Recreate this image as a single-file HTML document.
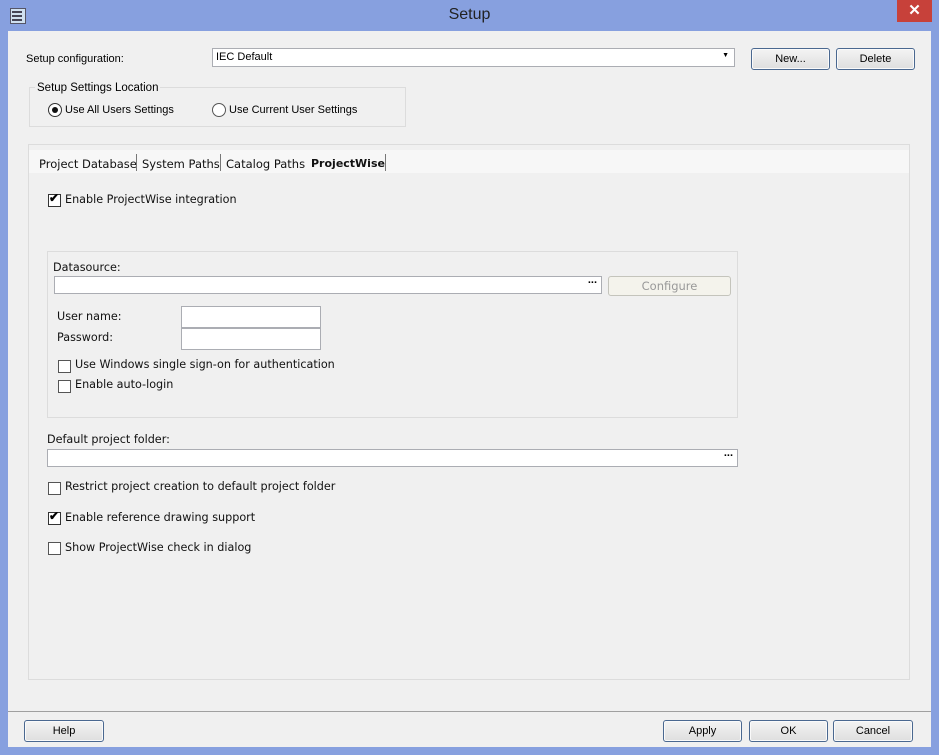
<!DOCTYPE html>
<html><head><style>
*{box-sizing:border-box;margin:0;padding:0}
body{width:939px;height:755px;background:#87a0df;position:relative;overflow:hidden;font-family:"Liberation Sans",sans-serif;font-size:12px;color:#000}
.a{position:absolute}
.c{background:#f0f0f0}
.btn{position:absolute;border:1px solid #707070;border-radius:3px;background:linear-gradient(#f4f4f4,#dedede);text-align:center;font-size:11px;line-height:20px;box-shadow:inset 0 0 0 1px #fafafa}
.btn.b{border-color:#4a6890}
.inp{position:absolute;background:#fff;border:1px solid #abadb3}
.cb{position:absolute;width:13px;height:13px;border:1px solid #333;background:#fff}
.t{position:absolute;font-family:"DejaVu Sans","Liberation Sans",sans-serif;font-size:11.2px;color:#111}
.dots{position:absolute;right:4px;top:-3px;font-size:11px;font-weight:bold;letter-spacing:0}
</style></head><body>
<div class="a" style="left:10px;top:8px;width:16px;height:16px;border:1px solid #556;background:#cfe0f0"></div>
<div class="a" style="left:12px;top:11px;width:10px;height:2px;background:#445"></div>
<div class="a" style="left:12px;top:15px;width:10px;height:2px;background:#445"></div>
<div class="a" style="left:12px;top:19px;width:10px;height:2px;background:#445"></div>
<div class="a" style="left:0;top:6px;width:939px;text-align:center;font-size:16px;color:#222">Setup</div>
<div class="a" style="left:897px;top:0;width:35px;height:22px;background:#c7413a;color:#fff;text-align:center;font-size:15px;line-height:22px;font-weight:bold">✕</div>
<div class="a c" style="left:8px;top:31px;width:923px;height:716px"></div>
<div class="a" style="left:26px;top:53px;font-size:11px">Setup configuration:</div>
<div class="inp" style="left:212px;top:48px;width:523px;height:19px;font-size:11px;padding:2px 3px">IEC Default<span style="position:absolute;right:5px;top:3px;font-size:7px">▼</span></div>
<div class="btn b" style="left:751px;top:48px;width:79px;height:22px">New...</div>
<div class="btn b" style="left:836px;top:48px;width:79px;height:22px">Delete</div>
<div class="a" style="left:29px;top:87px;width:377px;height:40px;border:1px solid #dcdcdc"></div>
<div class="a c" style="left:35px;top:82px;padding:0 2px;font-size:11.5px">Setup Settings Location</div>
<div class="a" style="left:48px;top:103px;width:14px;height:14px;border:1px solid #333;border-radius:50%;background:#fff"></div>
<div class="a" style="left:52px;top:107px;width:6px;height:6px;border-radius:50%;background:#111"></div>
<div class="a" style="left:65px;top:104px;font-size:11px">Use All Users Settings</div>
<div class="a" style="left:212px;top:103px;width:14px;height:14px;border:1px solid #555;border-radius:50%;background:#fff"></div>
<div class="a" style="left:229px;top:104px;font-size:11px">Use Current User Settings</div>
<div class="a" style="left:28px;top:144px;width:882px;height:536px;border:1px solid #dcdcdc"></div>
<div class="a" style="left:29px;top:150px;width:880px;height:23px;background:#f7f7f7"></div>
<div class="t" style="left:39px;top:157px;font-size:11.5px">Project Database</div>
<div class="a" style="left:136px;top:154px;width:1px;height:17px;background:#777"></div>
<div class="t" style="left:142px;top:157px;font-size:11.5px">System Paths</div>
<div class="a" style="left:220px;top:154px;width:1px;height:17px;background:#777"></div>
<div class="t" style="left:226px;top:157px;font-size:11.5px">Catalog Paths</div>
<div class="t" style="left:311px;top:157px;font-weight:bold;font-size:11px">ProjectWise</div>
<div class="a" style="left:385px;top:154px;width:1px;height:17px;background:#777"></div>
<div class="cb" style="left:48px;top:194px"></div><div class="a" style="left:49px;top:191px;font-size:12px;font-weight:bold">✔</div>
<div class="t" style="left:65px;top:193px">Enable ProjectWise integration</div>
<div class="a" style="left:47px;top:251px;width:691px;height:167px;border:1px solid #dcdcdc"></div>
<div class="t" style="left:53px;top:261px">Datasource:</div>
<div class="inp" style="left:54px;top:276px;width:548px;height:18px"><span class="dots">...</span></div>
<div class="a" style="left:608px;top:276px;width:123px;height:20px;border:1px solid #c4c4bc;border-radius:3px;background:#f4f3ec;text-align:center;line-height:19px;color:#999;font-family:'DejaVu Sans',sans-serif;font-size:11.5px">Configure</div>
<div class="t" style="left:57px;top:310px">User name:</div>
<div class="t" style="left:57px;top:331px">Password:</div>
<div class="inp" style="left:181px;top:306px;width:140px;height:22px"></div>
<div class="inp" style="left:181px;top:328px;width:140px;height:22px"></div>
<div class="cb" style="left:58px;top:360px;border-color:#555"></div>
<div class="t" style="left:75px;top:358px">Use Windows single sign-on for authentication</div>
<div class="cb" style="left:58px;top:380px;border-color:#555"></div>
<div class="t" style="left:75px;top:378px">Enable auto-login</div>
<div class="t" style="left:47px;top:433px">Default project folder:</div>
<div class="inp" style="left:47px;top:449px;width:691px;height:18px"><span class="dots">...</span></div>
<div class="cb" style="left:48px;top:482px;border-color:#555"></div>
<div class="t" style="left:65px;top:480px">Restrict project creation to default project folder</div>
<div class="cb" style="left:48px;top:512px"></div><div class="a" style="left:49px;top:509px;font-size:12px;font-weight:bold">✔</div>
<div class="t" style="left:65px;top:511px">Enable reference drawing support</div>
<div class="cb" style="left:48px;top:542px;border-color:#555"></div>
<div class="t" style="left:65px;top:541px">Show ProjectWise check in dialog</div>
<div class="a" style="left:8px;top:711px;width:923px;height:1px;background:#a0a0a0"></div>
<div class="btn b" style="left:24px;top:720px;width:80px;height:22px">Help</div>
<div class="btn b" style="left:663px;top:720px;width:79px;height:22px">Apply</div>
<div class="btn b" style="left:749px;top:720px;width:79px;height:22px">OK</div>
<div class="btn b" style="left:833px;top:720px;width:80px;height:22px">Cancel</div>
</body></html>
